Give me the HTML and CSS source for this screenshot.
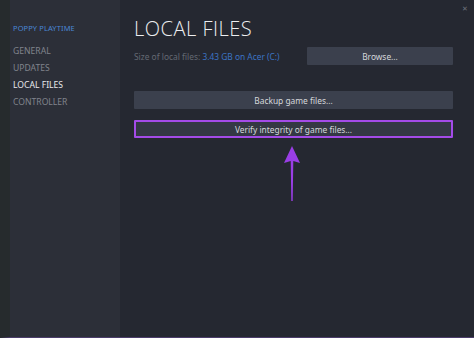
FILE: index.html
```html
<!DOCTYPE html>
<html lang="en">
<head>
  <meta charset="UTF-8" />
  <title>Poppy Playtime - Properties</title>
  <link rel="stylesheet" href="styles.css">
</head>
<body>
  <div class="window">
    <div class="sidebar">
      <div class="game-title">POPPY PLAYTIME</div>
      <div class="nav-item">GENERAL</div>
      <div class="nav-item">UPDATES</div>
      <div class="nav-item active">LOCAL FILES</div>
      <div class="nav-item">CONTROLLER</div>
    </div>

    <div class="main">
      <span class="close-btn">&#x2715;</span>
      <h1>LOCAL FILES</h1>

      <div class="size-row">
        <span class="size-text">Size of local files: <span class="size-value">3.43 GB on Acer (C:)</span></span>
        <button class="btn browse-btn">Browse...</button>
      </div>

      <button class="btn wide-btn">Backup game files...</button>
      <button class="btn wide-btn verify-btn">Verify integrity of game files...</button>

      <svg class="arrow" width="20" height="56" viewBox="0 0 20 56">
        <path d="M10 0 L18 17 L11.3 15 L10.7 55 L9.3 55 L8.7 15 L2 17 Z" fill="#9a3ee6"/>
      </svg>
    </div>
  </div>
</body>
</html>
```

FILE: styles.css
```css
body {
  margin: 0;
  background-color: #252831;
  font-family: 'Noto Sans', sans-serif;
  width: 474px;
  height: 338px;
  overflow: hidden;
}

.window {
  display: flex;
  height: 337px;
  border-bottom: 1px solid #4b3d6b;
  border-left: 10px solid #262b2d;
}

.sidebar {
  width: 110px;
  background-color: #2c2f38;
  padding-top: 23px;
  box-sizing: border-box;
}

.game-title {
  color: #4a86d4;
  font-size: 7.5px;
  padding-left: 3px;
  margin-bottom: 10px;
  letter-spacing: 0.1px;
}

.nav-item {
  color: #80848c;
  font-size: 8.6px;
  padding-left: 3px;
  height: 17px;
  line-height: 17px;
}

.nav-item.active {
  color: #e8e9eb;
}

.main {
  position: relative;
  flex: 1;
  padding: 0 21px 0 14px;
}

.close-btn {
  position: absolute;
  top: 4px;
  right: 6px;
  color: #6d727c;
  font-size: 7px;
}

h1 {
  margin: 16px 0 0 0;
  color: #eceef0;
  font-family: 'Open Sans', sans-serif;
  font-weight: 300;
  font-size: 20px;
  letter-spacing: 0.5px;
  line-height: 26px;
}

.size-row {
  display: flex;
  align-items: center;
  justify-content: space-between;
  margin-top: 5px;
}

.size-text {
  color: #646973;
  font-size: 8.4px;
}

.size-value {
  color: #3c74c4;
}

.btn {
  display: block;
  height: 18px;
  border: none;
  border-radius: 1px;
  background-color: #3b404d;
  color: #d6d8db;
  font-family: 'Noto Sans', sans-serif;
  font-size: 8.4px;
  padding: 0;
  cursor: pointer;
}

.browse-btn {
  width: 146px;
}

.wide-btn {
  width: 100%;
  margin-top: 26px;
}

.verify-btn {
  margin-top: 11px;
  border: 2px solid #a44be8;
  background-color: #343844;
}

.arrow {
  display: block;
  margin: 8px 0 0 148px;
}
```
